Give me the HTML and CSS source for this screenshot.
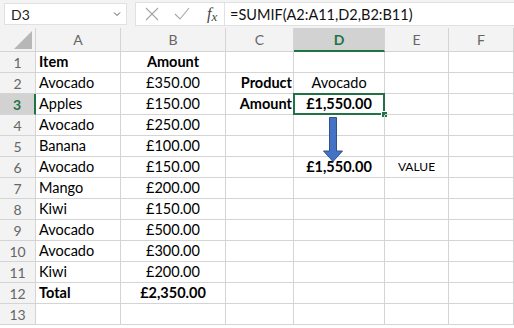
FILE: index.html
```html
<!DOCTYPE html>
<html lang="en">
<head>
  <meta charset="UTF-8">
  <title>SUMIF example</title>
  <link rel="stylesheet" href="styles.css">
</head>
<body>
  <!-- Formula bar -->
  <div class="formula-bar">
    <div class="name-box">
      <span>D3</span>
      <svg class="chevron" width="8" height="6" viewBox="0 0 8 6"><path d="M1 1.5 L4 4.5 L7 1.5" fill="none" stroke="#555" stroke-width="1"/></svg>
    </div>
    <div class="formula-box">
      <div class="fx-buttons">
        <svg width="14" height="14" viewBox="0 0 14 14"><path d="M1 1 L13 13 M13 1 L1 13" stroke="#a6a6a6" stroke-width="1.1" fill="none"/></svg>
        <svg width="16" height="14" viewBox="0 0 16 14"><path d="M1 7 L6 12 L15 1" stroke="#a6a6a6" stroke-width="1.1" fill="none"/></svg>
        <span class="fx">f<span class="fx-x">x</span></span>
      </div>
      <div class="formula-text">=SUMIF(A2:A11,D2,B2:B11)</div>
    </div>
  </div>

  <!-- Worksheet grid -->
  <div class="sheet">
    <div class="corner"><svg width="20" height="20" viewBox="0 0 20 20"><path d="M20 2 L20 20 L2 20 Z" fill="#b7b7b7"/></svg></div>
    <div class="col-head">A</div>
    <div class="col-head">B</div>
    <div class="col-head">C</div>
    <div class="col-head active">D</div>
    <div class="col-head">E</div>
    <div class="col-head">F</div>

    <div class="row-head">1</div>
    <div class="cell bold">Item</div>
    <div class="cell center bold">Amount</div>
    <div class="cell"></div><div class="cell"></div><div class="cell"></div><div class="cell"></div>

    <div class="row-head">2</div>
    <div class="cell">Avocado</div>
    <div class="cell center">£350.00</div>
    <div class="cell right bold">Product</div>
    <div class="cell center">Avocado</div>
    <div class="cell"></div><div class="cell"></div>

    <div class="row-head active">3</div>
    <div class="cell">Apples</div>
    <div class="cell center">£150.00</div>
    <div class="cell right bold">Amount</div>
    <div class="cell center bold selected">£1,550.00</div>
    <div class="cell"></div><div class="cell"></div>

    <div class="row-head">4</div>
    <div class="cell">Avocado</div>
    <div class="cell center">£250.00</div>
    <div class="cell"></div><div class="cell"></div><div class="cell"></div><div class="cell"></div>

    <div class="row-head">5</div>
    <div class="cell">Banana</div>
    <div class="cell center">£100.00</div>
    <div class="cell"></div><div class="cell"></div><div class="cell"></div><div class="cell"></div>

    <div class="row-head">6</div>
    <div class="cell">Avocado</div>
    <div class="cell center">£150.00</div>
    <div class="cell"></div>
    <div class="cell center bold">£1,550.00</div>
    <div class="cell center small">VALUE</div>
    <div class="cell"></div>

    <div class="row-head">7</div>
    <div class="cell">Mango</div>
    <div class="cell center">£200.00</div>
    <div class="cell"></div><div class="cell"></div><div class="cell"></div><div class="cell"></div>

    <div class="row-head">8</div>
    <div class="cell">Kiwi</div>
    <div class="cell center">£150.00</div>
    <div class="cell"></div><div class="cell"></div><div class="cell"></div><div class="cell"></div>

    <div class="row-head">9</div>
    <div class="cell">Avocado</div>
    <div class="cell center">£500.00</div>
    <div class="cell"></div><div class="cell"></div><div class="cell"></div><div class="cell"></div>

    <div class="row-head">10</div>
    <div class="cell">Avocado</div>
    <div class="cell center">£300.00</div>
    <div class="cell"></div><div class="cell"></div><div class="cell"></div><div class="cell"></div>

    <div class="row-head">11</div>
    <div class="cell">Kiwi</div>
    <div class="cell center">£200.00</div>
    <div class="cell"></div><div class="cell"></div><div class="cell"></div><div class="cell"></div>

    <div class="row-head">12</div>
    <div class="cell bold">Total</div>
    <div class="cell center bold">£2,350.00</div>
    <div class="cell"></div><div class="cell"></div><div class="cell"></div><div class="cell"></div>

    <div class="row-head">13</div>
    <div class="cell"></div><div class="cell"></div><div class="cell"></div><div class="cell"></div><div class="cell"></div><div class="cell"></div>

    <!-- blue arrow drawn over the sheet -->
    <svg class="arrow" width="22" height="46" viewBox="0 0 22 46">
      <path d="M7.5 0.5 L14.5 0.5 L14.5 34 L20.5 34 L11 44.5 L1.5 34 L7.5 34 Z" fill="#4472c4" stroke="#2f528f" stroke-width="1"/>
    </svg>
  </div>
</body>
</html>
```

FILE: styles.css
```css
body {
  margin: 0;
  background-color: #fff;
  font-family: Lato, "Open Sans", sans-serif;
  color: #000;
  width: 514px;
  height: 328px;
  overflow: hidden;
}

.formula-bar {
  display: flex;
  align-items: center;
  gap: 8px;
  height: 28px;
  padding: 0 0 0 4px;
  background-color: #f3f3f3;
  box-sizing: border-box;
}

.name-box {
  display: flex;
  align-items: center;
  justify-content: space-between;
  width: 123px;
  height: 22px;
  padding: 0 5px 0 6px;
  box-sizing: border-box;
  background-color: #fff;
  border: 1px solid #e1e1e1;
  font-size: 14px;
  color: #222;
}

.formula-box {
  display: flex;
  align-items: center;
  flex: 1;
  height: 22px;
  background-color: #fff;
  border: 1px solid #e1e1e1;
  border-right: none;
}

.fx-buttons {
  display: flex;
  align-items: center;
  gap: 15px;
  width: 89px;
  height: 100%;
  padding-left: 9px;
  box-sizing: border-box;
  border-right: 1px solid #e1e1e1;
}

.fx {
  font-family: "Liberation Serif", serif;
  font-style: italic;
  font-size: 16px;
  color: #444;
  margin-left: 2px;
}

.fx-x {
  font-size: 13px;
  position: relative;
  top: 2px;
}

.formula-text {
  padding-left: 5px;
  font-size: 14.5px;
  color: #111;
}

/* Sheet grid */
.sheet {
  position: relative;
  display: grid;
  grid-template-columns: 36px 85px 105px 68px 91px 64px 1fr;
  grid-template-rows: 24px repeat(13, 21px);
}

.corner,
.col-head,
.row-head {
  background-color: #f3f3f3;
  color: #666;
  font-size: 14px;
  box-sizing: border-box;
  display: flex;
  align-items: center;
  justify-content: center;
}

.corner {
  align-items: flex-end;
  justify-content: flex-end;
  padding: 0 3px 2px 0;
  border-right: 1px solid #d4d4d4;
  border-bottom: 1px solid #d4d4d4;
}

.col-head {
  border-right: 1px solid #d4d4d4;
  border-bottom: 1px solid #d4d4d4;
}

.col-head.active {
  background-color: #d2d2d2;
  color: #217346;
  font-weight: bold;
  border-bottom: 2px solid #217346;
}

.row-head {
  border-right: 1px solid #d4d4d4;
  border-bottom: 1px solid #d4d4d4;
}

.row-head.active {
  background-color: #d2d2d2;
  color: #217346;
  font-weight: bold;
  border-right: 2px solid #217346;
}

.cell {
  position: relative;
  box-sizing: border-box;
  border-right: 1px solid #d4d4d4;
  border-bottom: 1px solid #d4d4d4;
  padding: 0 3px;
  font-size: 14.5px;
  line-height: 20px;
  white-space: nowrap;
}

.cell.center {
  text-align: center;
}

.cell.right {
  text-align: right;
  padding-right: 1px;
}

.cell.bold {
  font-weight: bold;
}

.cell.small {
  font-size: 12px;
}

/* selected cell D3 */
.cell.selected::before {
  content: "";
  position: absolute;
  left: -1px;
  top: -1px;
  right: -1px;
  bottom: -1px;
  border: 2px solid #217346;
}

.cell.selected::after {
  content: "";
  position: absolute;
  right: -4px;
  bottom: -4px;
  width: 5px;
  height: 5px;
  background-color: #217346;
  border: 1px solid #fff;
}

.arrow {
  position: absolute;
  left: 322px;
  top: 89px;
}
```
